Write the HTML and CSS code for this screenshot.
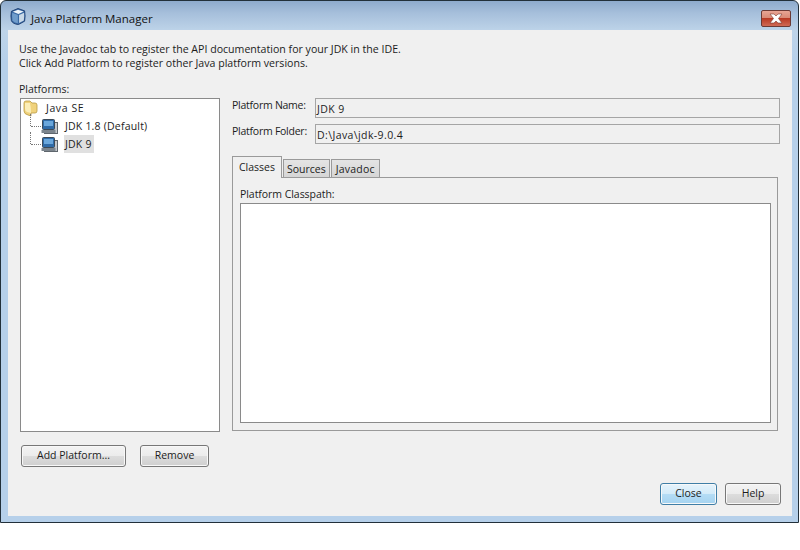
FILE: index.html
```html
<!DOCTYPE html>
<html lang="en">
<head>
<meta charset="utf-8">
<title>Java Platform Manager</title>
<link rel="stylesheet" href="styles.css">
</head>
<body>
<div class="window">
  <div class="titlebar">
    <svg class="app-icon" width="16" height="19" viewBox="0 0 17 19">
      <path d="M8.5 1 L15.5 3.5 Q16.5 9 15.5 14.5 L9 18 Q3 17.5 1.5 14 Q0.5 9 1.5 4 Z" fill="#3a6aa5" stroke="#1d3f73" stroke-width="1"/>
      <path d="M8.5 2.2 L14.5 4.2 L9 6.8 L3 4.4 Z" fill="#eef4fa"/>
      <path d="M9.6 7.8 L15 5.4 Q15.4 9 14.7 13.8 L9.6 16.4 Z" fill="#c9d9e8"/>
      <path d="M2.4 5.6 L8.4 7.9 L8.4 16.6 Q4 16 2.6 13.4 Q1.9 9 2.4 5.6 Z" fill="#6f9ccb"/>
    </svg>
    <span class="title">Java Platform Manager</span>
    <div class="close-x"><svg width="16" height="11" viewBox="0 0 16 11"><path d="M2 1 H6 L8 3 L10 1 H14 L10.5 5.5 L14 10 H10 L8 8 L6 10 H2 L5.5 5.5 Z" fill="#fff" stroke="#7b3a30" stroke-width=".6"/></svg></div>
  </div>
  <div class="client">
    <div class="intro">
      <div>Use the Javadoc tab to register the API documentation for your JDK in the IDE.</div>
      <div>Click Add Platform to register other Java platform versions.</div>
    </div>
    <div class="main">
      <div class="left">
        <div class="platforms-label">Platforms:</div>
        <div class="tree">
          <div class="row root">
            <svg width="15" height="17" viewBox="0 0 15 17">
              <path d="M1 3 Q1 1 3 1 H7 L9 3 H12 Q14 3 14 5 V11 Q14 13 12 13 H8 V16 L5 15 Q1 14 1 11 Z" fill="#f0d27c" stroke="#b99a45" stroke-width=".8"/>
              <path d="M2 3 H7 Q8 8 8 13 L4 12 Q2 11 2 9 Z" fill="#fbeeb8"/>
            </svg>
            <span class="root-text">Java SE</span>
          </div>
          <div class="row child">
            <svg class="pc" width="17" height="17" viewBox="0 0 17 17">
              <rect x="3.5" y="4.5" width="13" height="11" fill="#c5c8cc" stroke="#5f666d"/>
              <rect x="1.5" y="1.5" width="12" height="10" rx="1" fill="#2f6ba8" stroke="#3c4a58"/>
              <rect x="3" y="3" width="9" height="5" fill="#6aa7dc"/>
              <rect x="0.5" y="12" width="14" height="3" fill="#7c858d"/>
            </svg>
            <span class="item">JDK 1.8 (Default)</span>
          </div>
          <div class="row child last">
            <svg class="pc" width="17" height="17" viewBox="0 0 17 17">
              <rect x="3.5" y="4.5" width="13" height="11" fill="#c5c8cc" stroke="#5f666d"/>
              <rect x="1.5" y="1.5" width="12" height="10" rx="1" fill="#2f6ba8" stroke="#3c4a58"/>
              <rect x="3" y="3" width="9" height="5" fill="#6aa7dc"/>
              <rect x="0.5" y="12" width="14" height="3" fill="#7c858d"/>
            </svg>
            <span class="item selected">JDK 9</span>
          </div>
        </div>
        <div class="left-buttons">
          <button class="btn add">Add Platform...</button>
          <button class="btn remove">Remove</button>
        </div>
      </div>
      <div class="right">
        <div class="field">
          <span class="field-label">Platform Name:</span>
          <div class="input">JDK 9</div>
        </div>
        <div class="field second">
          <span class="field-label">Platform Folder:</span>
          <div class="input">D:\Java\jdk-9.0.4</div>
        </div>
        <div class="tabs">
          <div class="tab active">Classes</div>
          <div class="tab">Sources</div>
          <div class="tab wide">Javadoc</div>
        </div>
        <div class="tab-panel">
          <div class="panel-label">Platform Classpath:</div>
          <div class="classpath"></div>
        </div>
      </div>
    </div>
    <div class="footer">
      <button class="btn close">Close</button>
      <button class="btn help">Help</button>
    </div>
  </div>
</div>
</body>
</html>
```
FILE: styles.css
```css
* { box-sizing: border-box; }
html, body { margin: 0; padding: 0; background: #fff; }
body {
  width: 800px;
  height: 550px;
  overflow: hidden;
  font-family: "Open Sans", "Noto Sans", sans-serif;
  font-size: 10.5px;
  color: #1c1c1c;
}
.window {
  width: 799px;
  height: 523px;
  display: flex;
  flex-direction: column;
  border: 1px solid #22303a;
  border-radius: 6px 6px 0 0;
  padding: 0 5px 6px 7px;
  background: linear-gradient(#8eabcd 0, #a6bfdb 12px, #bed4e9 30px, #b6d0ea 60px);
}
.titlebar {
  height: 29px;
  display: flex;
  align-items: center;
  flex: none;
  margin: 0 0 0 2px;
  position: relative;
}
.app-icon { flex: none; margin-top: 1px; }
.title { margin-left: 5px; font-size: 11.5px; margin-top: 5px; color: #111; }
.close-x {
  position: absolute;
  right: 2px;
  top: 9px;
  width: 30px;
  height: 17px;
  border: 1px solid #6b3a35;
  border-radius: 2px;
  display: flex;
  align-items: center;
  justify-content: center;
  background: linear-gradient(#e8a594 0, #d98a76 45%, #b93a24 50%, #cf6a55 100%);
}
.client {
  flex: 1;
  display: flex;
  flex-direction: column;
  background: #f0f0f0;
  padding: 12px 11px 11px 12px;
  margin-right: 1px;
}
.intro { line-height: 14px; height: 28px; margin-left: -1px; font-size: 10.6px; }
.main { display: flex; margin-top: 12px; }
.left { width: 200px; flex: none; }
.platforms-label { height: 14px; line-height: 14px; margin-bottom: 2px; margin-left: -1px; }
.tree {
  height: 334px;
  background: #fff;
  border: 1px solid #8a8a8a;
  padding: 0 0 0 2px;
  letter-spacing: .2px;
}
.row { display: flex; align-items: center; height: 18px; position: relative; }
.root-text { margin-left: 8px; letter-spacing: .6px; }
.child { padding-left: 18px; }
.child::before {
  content: "";
  position: absolute;
  left: 8px;
  top: 9px;
  width: 10px;
  border-top: 1px dotted #777;
}
.child::after {
  content: "";
  position: absolute;
  left: 7px;
  top: -3px;
  height: 12px;
  border-left: 1px dotted #777;
}
.item { margin-left: 6px; padding: 0 1px; line-height: 18px; }
.selected { background: #e0e0e0; padding: 0 2px 0 1px; }
.left-buttons { display: flex; gap: 14px; margin: 13px 0 0 1px; }
.btn {
  height: 22px;
  padding: 0 0 2px;
  font: inherit;
  color: #1c1c1c;
  border: 1px solid #777;
  border-radius: 3px;
  background: linear-gradient(#f3f3f3 0, #ececec 48%, #dcdcdc 52%, #cfcfcf 100%);
  box-shadow: inset 0 0 0 1px #f8f8f8;
}
.add { width: 105px; }
.remove { width: 69px; }
.right { flex: 1; margin: 16px 0 0 12px; min-width: 0; }
.field { display: flex; height: 20px; align-items: flex-start; }
.second { margin-top: 6px; }
.field-label { width: 83px; flex: none; line-height: 14px; letter-spacing: -.25px; }
.input {
  flex: 1;
  height: 20px;
  line-height: 20px;
  background: #f0f0f0;
  border: 1px solid #a5a5a5;
  padding-left: 1px;
  margin-right: 1px;
  letter-spacing: .4px;
}
.tabs { display: flex; align-items: flex-end; height: 20px; margin-top: 13px; position: relative; }
.tab {
  height: 18px;
  line-height: 18px;
  padding: 0 3px;
  margin-right: 1px;
  border: 1px solid #9a9a9a;
  border-bottom: 0;
  background: linear-gradient(#e4e4e4, #d6d6d6);
}
.tab.wide { padding: 0 4px; letter-spacing: .2px; }
.tab.active {
  height: 22px;
  line-height: 20px;
  padding: 0 6px;
  background: #f0f0f0;
  margin-bottom: -1px;
  position: relative;
  z-index: 1;
}
.tab-panel {
  height: 254px;
  border: 1px solid #9a9a9a;
  padding: 9px 6px 7px 7px;
  display: flex;
  flex-direction: column;
  margin-right: 3px;
}
.panel-label { height: 16px; line-height: 14px; letter-spacing: -.05px; }
.classpath { flex: 1; background: #fff; border: 1px solid #8a8a8a; }
.footer { display: flex; justify-content: flex-end; gap: 8px; margin-top: auto; }
.close {
  width: 57px;
  border-color: #3f7ea6;
  background: linear-gradient(#e6f3fb 0, #d3ebf9 48%, #b4dcf5 52%, #a5d3f0 100%);
}
.help { width: 56px; }
```
